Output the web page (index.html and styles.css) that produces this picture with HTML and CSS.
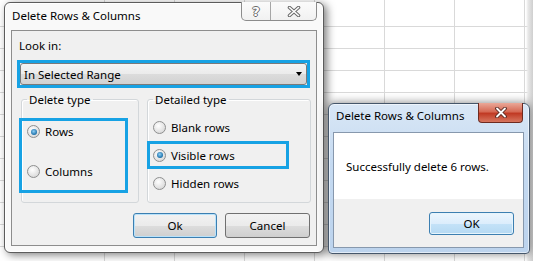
FILE: index.html
```html
<!DOCTYPE html>
<html lang="en">
<head>
<meta charset="UTF-8" />
<title>Delete Rows &amp; Columns</title>
<link rel="stylesheet" href="styles.css">
</head>
<body>

<div class="desktop">

<div class="dlg dlg-main">
<div class="titlebar">
<span class="title">Delete Rows &amp; Columns</span>
<div class="caps">
<span class="cap cap-help">?</span>
<span class="cap cap-close">
<svg width="14" height="11" viewBox="0 0 14 11">
<path d="M2.5 1.5 L11.5 9.5 M11.5 1.5 L2.5 9.5" stroke="#6a6a6a" stroke-width="3.6" stroke-linecap="round"/>
<path d="M2.5 1.5 L11.5 9.5 M11.5 1.5 L2.5 9.5" stroke="#fdfdfd" stroke-width="1.6" stroke-linecap="round"/>
</svg>
</span>
</div>
</div>

<div class="client">
<div class="look-label">Look in:</div>
<div class="hl hl-select">
<div class="select"><span>In Selected Range</span><span class="arrow"></span></div>
</div>

<div class="groups">
<fieldset class="group g-delete">
<legend>Delete type</legend>
<div class="hl hl-radios">
<div class="opt"><span class="radio on"></span>Rows</div>
<div class="opt"><span class="radio"></span>Columns</div>
</div>
</fieldset>
<fieldset class="group g-detail">
<legend>Detailed type</legend>
<div class="opt-row first"><span class="radio"></span>Blank rows</div>
<div class="opt-row hl hl-visible"><span class="radio on"></span>Visible rows</div>
<div class="opt-row"><span class="radio"></span>Hidden rows</div>
</fieldset>
</div>

<div class="actions">
<button class="btn btn-ok">Ok</button>
<button class="btn btn-cancel">Cancel</button>
</div>
</div>
</div>

<div class="dlg dlg-msg">
<div class="msg-titlebar">
<span class="msg-title">Delete Rows &amp; Columns</span>
<span class="red-close">
<svg width="14" height="11" viewBox="0 0 14 11">
<path d="M3 1.5 L11 9.5 M11 1.5 L3 9.5" stroke="#5a2a22" stroke-width="3.8" stroke-linecap="round"/>
<path d="M3 1.5 L11 9.5 M11 1.5 L3 9.5" stroke="#ffffff" stroke-width="1.8" stroke-linecap="round"/>
</svg>
</span>
</div>
<div class="msg-client">
<div class="msg-body">Successfully delete 6 rows.</div>
<div class="msg-foot">
<button class="btn btn-aero">OK</button>
</div>
</div>
</div>

</div>

</body>
</html>
```

FILE: styles.css
```css
* { box-sizing: border-box; }
body {
margin: 0;
font-family: "Noto Sans", "Open Sans", sans-serif;
font-size: 11.5px;
color: #000;
}
.desktop {
position: relative;
width: 533px;
height: 261px;
overflow: hidden;
background-color: #fff;
background-image:
linear-gradient(to right, transparent 526px, #e8e8e8 528px, #cfcfcf 533px),
repeating-linear-gradient(to bottom, transparent 0 21px, #d9d9d9 21px 22px),
repeating-linear-gradient(to right, transparent 0 69px, #d9d9d9 69px 70px);
background-position: 0 0, 0 5px, 35px 0;
}

/* windows on the desktop */
.dlg {
position: absolute;
display: flex;
flex-direction: column;
}
.dlg-main {
left: 4px;
top: 2px;
width: 320px;
height: 251px;
border: 1px solid #5c5c5c;
border-radius: 6px;
background: #f9f9f9;
padding: 0 6px 6px;
box-shadow: 3px 2px 8px rgba(0, 0, 0, 0.5), inset 0 0 0 1px #fff;
}
.titlebar {
height: 27px;
display: flex;
justify-content: space-between;
align-items: flex-start;
}
.title {
padding: 5px 0 0 1px;
line-height: 15px;
}
.caps {
display: flex;
margin-top: -1px;
height: 19px;
border: 1px solid #8c8c8c;
border-top: none;
border-radius: 0 0 5px 5px;
overflow: hidden;
background: linear-gradient(#fbfbfb, #f1f1f1);
}
.cap {
display: flex;
align-items: center;
justify-content: center;
}
.cap-help {
width: 28px;
font-family: "DejaVu Sans", sans-serif;
font-size: 13px;
font-weight: bold;
color: #fff;
text-shadow: 1px 0 #6a6a6a, -1px 0 #6a6a6a, 0 1px #6a6a6a, 0 -1px #6a6a6a;
}
.cap-close {
width: 46px;
border-left: 1px solid #a6a6a6;
}

.client {
flex: 1;
border: 1px solid #8d8d8d;
background: #f0f0f0;
padding-top: 7px;
}
.look-label {
padding-left: 7px;
line-height: 15px;
}
.hl { border: 3px solid #17a2e4; }
.hl-select {
margin: 7px 6px 0 5px;
}
.select {
height: 22px;
display: flex;
align-items: center;
justify-content: space-between;
padding: 0 2px 0 3px;
border: 1px solid #7a7a7a;
border-radius: 3px;
background: linear-gradient(#f4f4f4, #ebebeb 50%, #dcdcdc 51%, #d2d2d2);
}
.arrow {
width: 0;
height: 0;
border-left: 3.5px solid transparent;
border-right: 3.5px solid transparent;
border-top: 4px solid #000;
margin-right: 2px;
}

.groups {
display: flex;
gap: 8px;
margin: 4px 0 0 9px;
}
.group {
margin: 0;
padding: 0;
height: 111px;
border: 1px solid #d3d7da;
border-radius: 3px;
box-shadow: inset 1px 1px #fff;
}
.group legend {
margin-left: 5px;
padding: 0 2px;
line-height: 15px;
}
.g-delete { width: 118px; }
.g-detail { width: 164px; }

.hl-radios {
width: 109px;
height: 75px;
margin: 11px 0 0 -3px;
padding: 3px 0 0 5px;
display: flex;
flex-direction: column;
gap: 25px;
}
.opt, .opt-row {
display: flex;
align-items: center;
gap: 5px;
line-height: 15px;
}
.opt { height: 15px; }
.opt-row {
height: 28px;
padding-left: 5px;
}
.opt-row.first { margin-top: 6px; }
.hl-visible {
width: 142px;
margin-left: -1px;
padding-left: 3px;
}
.radio {
position: relative;
width: 13px;
height: 13px;
flex: none;
border: 1px solid #8e8f8f;
border-radius: 50%;
background: radial-gradient(circle at 40% 35%, #ffffff, #e2e2e2 60%, #cfcfcf);
}
.radio.on::after {
content: "";
position: absolute;
left: 2.5px;
top: 2.5px;
width: 6px;
height: 6px;
border-radius: 50%;
background: radial-gradient(circle at 45% 40%, #8fd0f7, #1b6fa8 70%, #0d4b7a);
}

.actions {
display: flex;
justify-content: flex-end;
gap: 8px;
margin-top: 10px;
padding-right: 6px;
}
.btn {
height: 25px;
font-family: inherit;
font-size: 11.5px;
color: #000;
border: 1px solid #707070;
border-radius: 3px;
background: linear-gradient(#f2f2f2, #ebebeb 50%, #dddddd 51%, #cfcfcf);
padding: 0;
}
.btn-ok {
width: 84px;
border-color: #3c7fb1;
box-shadow: inset 0 0 0 1px #b9e2fa;
}
.btn-cancel { width: 85px; }

/* message box */
.dlg-msg {
left: 328px;
top: 103px;
width: 202px;
height: 151px;
border: 1px solid #45566a;
border-radius: 6px 6px 4px 4px;
padding: 0 5px 5px 4px;
background: linear-gradient(#d9e7f6, #c5daf1 40%, #bcd3ed);
box-shadow: 0 0 10px rgba(0, 0, 0, 0.5), inset 0 0 0 1px rgba(255, 255, 255, 0.55);
}
.msg-titlebar {
height: 28px;
display: flex;
justify-content: space-between;
align-items: flex-start;
}
.msg-title {
padding: 4px 0 0 3px;
line-height: 15px;
}
.red-close {
display: flex;
align-items: center;
justify-content: center;
width: 45px;
height: 20px;
margin: -1px 1px 0 0;
border: 1px solid #6e2a20;
border-top: none;
border-radius: 0 0 4px 4px;
background: linear-gradient(#eaa898, #d66a55 45%, #c13a24 55%, #d7765f);
}
.msg-client {
flex: 1;
display: flex;
flex-direction: column;
border: 1px solid #8798ad;
}
.msg-body {
height: 66px;
display: flex;
align-items: center;
padding-left: 12px;
background: #fff;
}
.msg-foot {
flex: 1;
display: flex;
justify-content: flex-end;
align-items: flex-start;
padding: 13px 9px 0 0;
background: #f0f0f0;
}
.btn-aero {
width: 85px;
height: 23px;
border-color: #3c7fb1;
background: linear-gradient(#ecf6fd, #dcedfc 50%, #c4e2f8 51%, #b5d9f3);
box-shadow: inset 0 0 0 1px #e6f4fc;
}
```
